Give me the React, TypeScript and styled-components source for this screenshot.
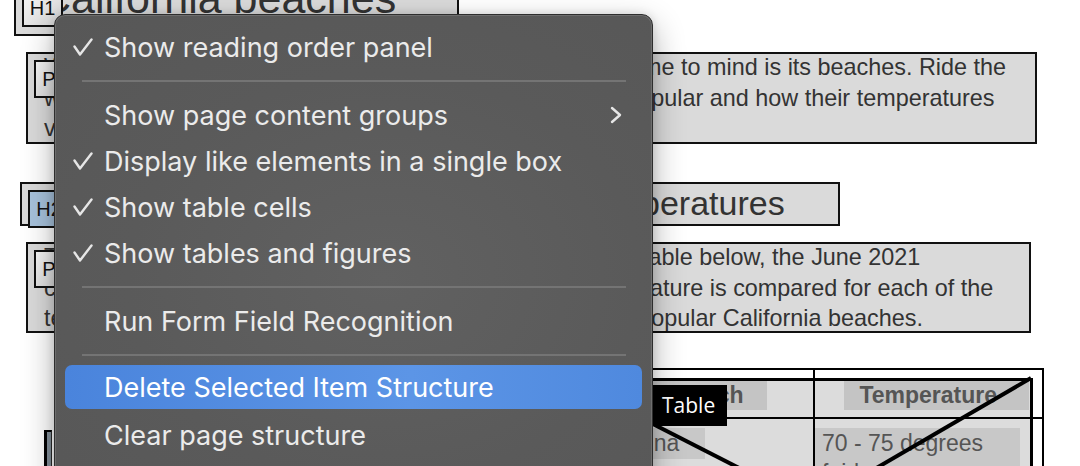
import React from 'react';
import styled, { createGlobalStyle, css } from 'styled-components';

const GlobalStyle = createGlobalStyle`
  html, body {
    margin: 0;
    padding: 0;
    background: #fff;
    overflow: hidden;
  }
  body {
    font-family: "Liberation Sans", Arial, sans-serif;
  }
`;

const Screen = styled.div`
  position: relative;
  width: 1080px;
  height: 466px;
  overflow: hidden;
  background: #fff;
`;

/* ---------- document behind the menu ---------- */

const Doc = styled.div`
  display: flex;
  flex-direction: column;
  margin-top: -19px;
  color: #333;
`;

const Element = styled.div<{ $left: number; $width: number; $height: number; $gap: number }>`
  position: relative;
  box-sizing: border-box;
  flex: none;
  margin: ${p => p.$gap}px 0 0 ${p => p.$left}px;
  width: ${p => p.$width}px;
  height: ${p => p.$height}px;
  border: 2px solid #111;
  background: #dadada;
`;

const Tag = styled.div<{ $width: number; $blue?: boolean }>`
  position: absolute;
  left: 6px;
  top: 6px;
  box-sizing: border-box;
  width: ${p => p.$width}px;
  height: 38px;
  border: 2px solid #111;
  display: flex;
  align-items: center;
  justify-content: center;
  font-size: 20px;
  color: #111;
  z-index: 2;
  ${p => p.$blue ? css`
    background: #a7c2dc;
  ` : css`
    background: linear-gradient(135deg, #f6f6f6, #d6d6d6);
  `}
`;

const HeadingText = styled.div<{ $size: number; $lh: number; $pad: number }>`
  font-size: ${p => p.$size}px;
  line-height: ${p => p.$lh}px;
  padding-left: ${p => p.$pad}px;
  white-space: nowrap;
  color: #333;
`;

const Para = styled.div`
  margin-top: -2px;
  padding-left: 16px;
  font-size: 23.4px;
  line-height: 30.5px;
  white-space: nowrap;
  color: #333;
`;

const TableSection = styled.div`
  display: flex;
  align-items: flex-start;
  margin-top: 35px;
`;

const Sliver = styled.div`
  flex: none;
  margin: 62px 0 0 44px;
  width: 4px;
  height: 40px;
  border-left: 3px solid #000;
  border-top: 2px solid #000;
  border-right: 1px solid #2a2a2a;
  background: #85919c;
`;

const TableWrap = styled.div`
  position: relative;
  flex: none;
  box-sizing: border-box;
  margin-left: 548px;
  width: 444px;
  height: 110px;
  border: 2px solid #000;
  border-bottom: none;
  padding: 8px 9px 0 0;
`;

const TableBox = styled.div`
  height: 120px;
  border: 3px solid #000;
  background: #dcdcdc;
  display: grid;
  grid-template-columns: 208px 1fr;
  grid-template-rows: 36px 1fr;
`;

const HeadCell = styled.div<{ $end?: boolean }>`
  display: flex;
  justify-content: ${p => (p.$end ? 'flex-end' : 'center')};
  align-items: flex-start;
  padding-right: ${p => (p.$end ? 1 : 0)}px;
`;

const HeadLabel = styled.span<{ $padL: number; $padR: number }>`
  display: block;
  height: 29px;
  line-height: 29px;
  padding: 0 ${p => p.$padR}px 0 ${p => p.$padL}px;
  background: #c4c4c4;
  font-weight: 700;
  font-size: 23px;
  color: #555;
`;

const BodyCell = styled.div`
  padding-left: 0;
`;

const BodyLabel = styled.span<{ $padL: number; $padR: number }>`
  display: inline-block;
  margin-top: 11px;
  padding: 0 ${p => p.$padR}px 1px ${p => p.$padL}px;
  background: #c8c8c8;
  font-size: 23px;
  line-height: 30px;
  color: #555;
`;

const RuleV = styled.div`
  position: absolute;
  left: 211px;
  top: 0;
  bottom: 0;
  width: 2px;
  background: #000;
`;

const RuleH = styled.div`
  position: absolute;
  left: 0;
  right: 0;
  top: 47px;
  height: 2px;
  background: #000;
`;

const TableFlag = styled.div`
  position: absolute;
  left: 48px;
  top: 15px;
  width: 77px;
  height: 41px;
  box-sizing: border-box;
  padding-left: 12px;
  background: #000;
  color: #fff;
  font-family: "Open Sans", "DejaVu Sans", sans-serif;
  font-size: 21px;
  line-height: 41px;
  z-index: 3;
`;

const Cross = styled.svg`
  position: absolute;
  left: 0;
  top: 0;
  overflow: visible;
  z-index: 2;
`;

/* ---------- context menu ---------- */

const Menu = styled.div`
  position: absolute;
  left: 54px;
  top: 14px;
  width: 599px;
  height: 480px;
  box-sizing: border-box;
  padding: 9px 10px;
  border-radius: 11px;
  border: 1px solid #2e2e2e;
  background: radial-gradient(ellipse at 55% 55%, #616161 0%, #5a5a5a 55%, #575757 100%);
  box-shadow: inset 0 0 0 1px rgba(255, 255, 255, 0.13), 0 12px 32px rgba(0, 0, 0, 0.32), 0 0 10px rgba(0, 0, 0, 0.12);
  font-family: Inter, "Noto Sans", sans-serif;
  z-index: 10;
`;

const Item = styled.div<{ $active?: boolean }>`
  position: relative;
  display: flex;
  align-items: center;
  height: 46px;
  padding-left: 39px;
  font-size: 27px;
  color: #ebebeb;
  white-space: nowrap;
  border-radius: 7px;
  ${p => p.$active && css`
    height: 44px;
    margin: -1px 0 3px;
    color: #fff;
    background: linear-gradient(90deg, #4a84dc 0%, #5c95e6 60%, #4f89de 100%);
  `}
`;

const Check = styled.svg`
  position: absolute;
  left: 8px;
  top: 50%;
  margin-top: -9px;
`;

const Chevron = styled.svg`
  position: absolute;
  right: 19px;
  top: 50%;
  margin-top: -9px;
`;

const Separator = styled.div`
  display: flex;
  align-items: center;
  height: 22px;
  padding: 0 16px 0 17px;
  &::after {
    content: '';
    flex: 1;
    height: 2px;
    background: #747474;
  }
`;

type Entry = { label: string; checked?: boolean; sub?: boolean; active?: boolean } | 'sep';

const entries: Entry[] = [
  { label: 'Show reading order panel', checked: true },
  'sep',
  { label: 'Show page content groups', sub: true },
  { label: 'Display like elements in a single box', checked: true },
  { label: 'Show table cells', checked: true },
  { label: 'Show tables and figures', checked: true },
  'sep',
  { label: 'Run Form Field Recognition' },
  'sep',
  { label: 'Delete Selected Item Structure', active: true },
  { label: 'Clear page structure' },
];

const CheckMark = () => (
  <Check width="20" height="18" viewBox="0 0 20 18">
    <path d="M1.5 8.5 L7 16.5 L18.5 1.5" fill="none" stroke="#e6e6e6" strokeWidth="2.4" strokeLinecap="round" strokeLinejoin="round" />
  </Check>
);

const SubArrow = () => (
  <Chevron width="14" height="18" viewBox="0 0 14 18">
    <path d="M3 2 L11 9 L3 16" fill="none" stroke="#e6e6e6" strokeWidth="2.4" strokeLinecap="round" strokeLinejoin="round" />
  </Chevron>
);

const ContextMenu = () => (
  <Menu>
    {entries.map((e, i) =>
      e === 'sep' ? (
        <Separator key={i} />
      ) : (
        <Item key={i} $active={e.active}>
          {e.checked && <CheckMark />}
          {e.label}
          {e.sub && <SubArrow />}
        </Item>
      )
    )}
  </Menu>
);

export default function App() {
  return (
    <Screen>
      <GlobalStyle />
      <Doc>
        <Element $left={14} $width={445} $height={55} $gap={0}>
          <Tag $width={41}>H1</Tag>
          <HeadingText $size={43} $lh={30} $pad={24}>California beaches</HeadingText>
        </Element>

        <Element $left={26} $width={1011} $height={92} $gap={16}>
          <Tag $width={30}>P</Tag>
          <Para>
            When we think about California, the first thing that may come to mind is its beaches. Ride the<br />
            waves along the coast to learn which beaches are most popular and how their temperatures<br />
            vary.
          </Para>
        </Element>

        <Element $left={20} $width={820} $height={44} $gap={38}>
          <Tag $width={42} $blue>H2</Tag>
          <HeadingText $size={34} $lh={38} $pad={18}>Top 10 California beaches and their temperatures</HeadingText>
        </Element>

        <Element $left={26} $width={1005} $height={91} $gap={16}>
          <Tag $width={30}>P</Tag>
          <Para>
            To help you plan your trip to the coast this summer, in the table below, the June 2021<br />
            conditions at each beach are listed, and the overall temperature is compared for each of the<br />
            ten beaches that all our readers have picked as the most popular California beaches.
          </Para>
        </Element>

        <TableSection>
          <Sliver />
          <TableWrap>
            <TableBox>
              <HeadCell>
                <HeadLabel $padL={23} $padR={23}>Beach</HeadLabel>
              </HeadCell>
              <HeadCell $end>
                <HeadLabel $padL={15} $padR={32}>Temperature</HeadLabel>
              </HeadCell>
              <BodyCell>
                <BodyLabel $padL={4} $padR={26}>Marina</BodyLabel>
              </BodyCell>
              <BodyCell>
                <BodyLabel $padL={9} $padR={37}>70 - 75 degrees<br />fairly warm</BodyLabel>
              </BodyCell>
            </TableBox>
            <RuleV />
            <RuleH />
            <Cross width="442" height="100" viewBox="0 0 442 100">
              <line x1="429" y1="8" x2="271" y2="100" stroke="#000" strokeWidth="4" />
              <line x1="0" y1="28" x2="141" y2="100" stroke="#000" strokeWidth="4" />
            </Cross>
            <TableFlag>Table</TableFlag>
          </TableWrap>
        </TableSection>
      </Doc>

      <ContextMenu />
    </Screen>
  );
}
